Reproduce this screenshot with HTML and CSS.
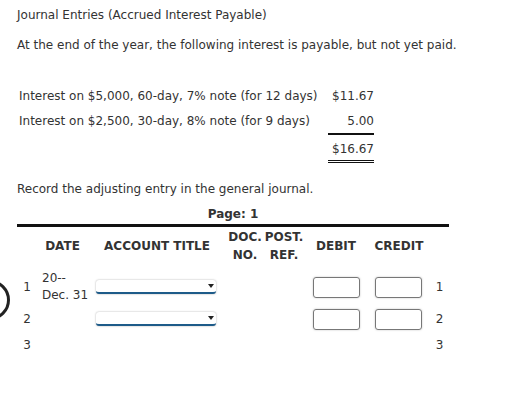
FILE: index.html
```html
<!DOCTYPE html>
<html lang="en">
<head>
    <meta charset="UTF-8" />
    <title>Journal Entries (Accrued Interest Payable)</title>
    <link rel="stylesheet" href="styles.css">
</head>
<body>
    <div class="side-circle"></div>

    <div class="content">
        <p class="title">Journal Entries (Accrued Interest Payable)</p>
        <p class="intro">At the end of the year, the following interest is payable, but not yet paid.</p>

        <table class="interest">
            <tr>
                <td class="desc">Interest on $5,000, 60-day, 7% note (for 12 days)</td>
                <td class="amt">$11.67</td>
            </tr>
            <tr>
                <td class="desc">Interest on $2,500, 30-day, 8% note (for 9 days)</td>
                <td class="amt single">5.00</td>
            </tr>
            <tr>
                <td class="desc"></td>
                <td class="amt"><span class="double">$16.67</span></td>
            </tr>
        </table>

        <p class="record">Record the adjusting entry in the general journal.</p>

        <div class="journal">
            <div class="page-label">Page: 1</div>
            <table class="jtable">
                <thead>
                    <tr>
                        <th class="c-num"></th>
                        <th class="c-date">DATE</th>
                        <th class="c-acct">ACCOUNT TITLE</th>
                        <th class="c-doc">DOC.<br>NO.</th>
                        <th class="c-ref">POST.<br>REF.</th>
                        <th class="c-debit">DEBIT</th>
                        <th class="c-credit">CREDIT</th>
                        <th class="c-rnum"></th>
                    </tr>
                </thead>
                <tbody>
                    <tr class="row1">
                        <td class="c-num">1</td>
                        <td class="c-date">20--<br>Dec. 31</td>
                        <td class="c-acct"><div class="select"><span class="arrow"></span></div></td>
                        <td></td>
                        <td></td>
                        <td class="c-debit"><div class="amount-box"></div></td>
                        <td class="c-credit"><div class="amount-box"></div></td>
                        <td class="c-rnum">1</td>
                    </tr>
                    <tr class="row2">
                        <td class="c-num">2</td>
                        <td class="c-date"></td>
                        <td class="c-acct"><div class="select"><span class="arrow"></span></div></td>
                        <td></td>
                        <td></td>
                        <td class="c-debit"><div class="amount-box"></div></td>
                        <td class="c-credit"><div class="amount-box"></div></td>
                        <td class="c-rnum">2</td>
                    </tr>
                    <tr class="row3">
                        <td class="c-num">3</td>
                        <td></td>
                        <td></td>
                        <td></td>
                        <td></td>
                        <td></td>
                        <td></td>
                        <td class="c-rnum">3</td>
                    </tr>
                </tbody>
            </table>
        </div>
    </div>
</body>
</html>
```

FILE: styles.css
```css
body {
    font-family: "DejaVu Sans", Verdana, sans-serif;
    font-size: 12px;
    color: #333;
    background-color: #fff;
    margin: 0;
    padding: 0;
    overflow: hidden;
}

.content {
    padding: 7px 0 0 17px;
}

p {
    margin: 0;
}

.title {
    line-height: 16px;
}

.intro {
    margin-top: 14px;
    line-height: 16px;
}

.interest {
    border-collapse: collapse;
    margin: 30px 0 0 2px;
}

.interest td {
    padding: 0;
    height: 25px;
    vertical-align: middle;
    white-space: nowrap;
}

.interest .desc {
    width: 309px;
}

.interest .amt {
    width: 46px;
    text-align: right;
}

.interest .single {
    border-bottom: 2px solid #111;
}

.interest tr:last-child td {
    height: auto;
}

.interest .double {
    display: block;
    line-height: 16px;
    padding: 6px 0 3px 0;
    border-bottom: 3px double #111;
}

.record {
    margin-top: 18px;
    line-height: 16px;
}

.journal {
    width: 432px;
    margin-top: 9px;
}

.page-label {
    text-align: center;
    font-weight: bold;
    line-height: 16px;
}

.jtable {
    width: 100%;
    table-layout: fixed;
    border-collapse: collapse;
    border-top: 3px solid #111;
    margin-top: 2px;
}

.jtable th {
    font-weight: bold;
    font-size: 12px;
    line-height: 18px;
    padding: 1px 0 4px 0;
    text-align: center;
    white-space: nowrap;
}

.jtable td {
    padding: 0;
    vertical-align: middle;
}

.c-num {
    width: 20px;
}

.c-rnum {
    width: 19px;
}

.jtable td.c-num,
.jtable td.c-rnum {
    text-align: center;
}

.c-date {
    width: 51px;
}

.jtable td.c-date {
    line-height: 17px;
    padding-left: 5px;
    white-space: nowrap;
}

.c-acct {
    width: 138px;
}

.c-doc {
    width: 38px;
}

.c-ref {
    width: 40px;
}

.c-debit {
    width: 64px;
}

.c-credit {
    width: 62px;
}

.row1 td {
    height: 38px;
}

.row2 td {
    height: 26px;
}

.row3 td {
    height: 26px;
}

.select {
    position: relative;
    width: 120px;
    height: 12px;
    margin-left: 8px;
    background: #fff;
    border-radius: 3px;
    box-shadow: 0 0 2px rgba(0, 0, 0, 0.35);
    border-bottom: 2px solid #1d5b89;
}

.select .arrow {
    position: absolute;
    right: 2px;
    top: 4px;
    border-left: 3px solid transparent;
    border-right: 3px solid transparent;
    border-top: 4px solid #222;
}

.amount-box {
    width: 45px;
    height: 19px;
    margin: 0 auto;
    border: 1px solid #777;
    border-radius: 3px;
    box-shadow: 0 0 2px rgba(0, 0, 0, 0.25);
}

.jtable td.c-credit .amount-box {
    margin-left: 7px;
}

.side-circle {
    position: absolute;
    left: -30px;
    top: 280px;
    width: 34px;
    height: 34px;
    border: 3px solid #222;
    border-radius: 50%;
}
```
